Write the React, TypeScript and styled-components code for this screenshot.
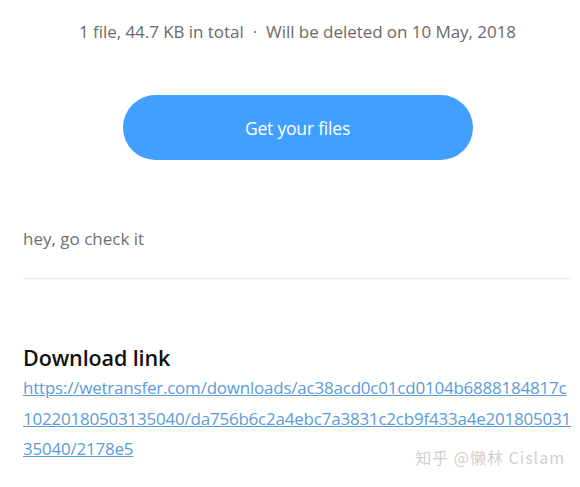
import React from "react";
import styled, { createGlobalStyle } from "styled-components";

const Global = createGlobalStyle`
  html, body { margin: 0; padding: 0; background: #ffffff; }
  body { font-family: "Open Sans", "Noto Sans", "Noto Sans CJK SC", sans-serif; }
`;

const Page = styled.div`
  position: relative;
  width: 580px;
  height: 487px;
  overflow: hidden;
  background: #fff;
`;

const Content = styled.main`
  width: 549px;
  margin-left: 23px;
  padding-top: 20px;
  display: flex;
  flex-direction: column;
`;

const Meta = styled.p`
  margin: 0;
  text-align: center;
  font-size: 17px;
  line-height: 24px;
  color: #6a6a6a;
  letter-spacing: -0.05px;
`;

const Dot = styled.span`
  margin: 0 9px;
`;

const ButtonRow = styled.div`
  display: flex;
  justify-content: center;
  margin-top: 51px;
`;

const GetButton = styled.button`
  width: 350px;
  height: 65px;
  border: none;
  border-radius: 33px;
  background: #409fff;
  color: #ffffff;
  font-family: inherit;
  font-size: 17.5px;
  letter-spacing: -0.2px;
  cursor: pointer;
`;

const Message = styled.p`
  margin: 67px 0 0;
  font-size: 17px;
  line-height: 24px;
  color: #707070;
  letter-spacing: 0px;
`;

const Divider = styled.hr`
  margin: 27px 0 0;
  border: none;
  border-top: 1px solid #ececec;
`;

const Heading = styled.h2`
  margin: 64px 0 0;
  font-size: 21.5px;
  font-weight: 600;
  line-height: 30px;
  color: #111;
  letter-spacing: -0.1px;
`;

const Link = styled.a`
  display: block;
  margin-top: 0px;
  font-size: 17px;
  line-height: 30.5px;
  color: #5b9bd8;
  text-decoration: underline;
  letter-spacing: -0.22px;
  white-space: nowrap;
`;

const Watermark = styled.div`
  position: absolute;
  right: 15px;
  bottom: 18px;
  font-family: "Noto Sans CJK SC", "Noto Sans", sans-serif;
  font-size: 16px;
  color: #cfcfcf;
  letter-spacing: 1px;
`;

export default function App() {
  return (
    <Page>
      <Global />
      <Content>
        <Meta>
          1 file, 44.7 KB in total<Dot>·</Dot>Will be deleted on 10 May, 2018
        </Meta>
        <ButtonRow>
          <GetButton>Get your files</GetButton>
        </ButtonRow>
        <Message>hey, go check it</Message>
        <Divider />
        <Heading>Download link</Heading>
        <Link href="#">
          https://wetransfer.com/downloads/ac38acd0c01cd0104b6888184817c
          <br />
          10220180503135040/da756b6c2a4ebc7a3831c2cb9f433a4e201805031
          <br />
          35040/2178e5
        </Link>
      </Content>
      <Watermark>知乎 @懒林 Cislam</Watermark>
    </Page>
  );
}
